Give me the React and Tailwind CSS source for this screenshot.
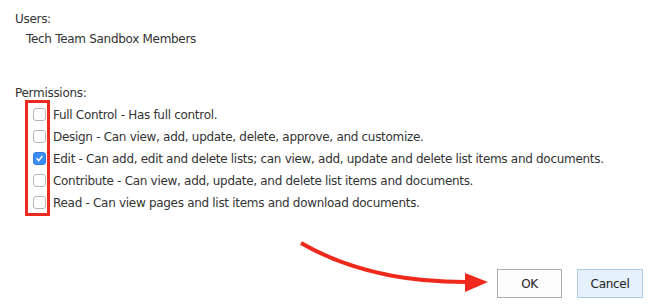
import React from "react";

const rows = [
	{ label: "Full Control - Has full control.", checked: false },
	{ label: "Design - Can view, add, update, delete, approve, and customize.", checked: false },
	{ label: "Edit - Can add, edit and delete lists; can view, add, update and delete list items and documents.", checked: true },
	{ label: "Contribute - Can view, add, update, and delete list items and documents.", checked: false },
	{ label: "Read - Can view pages and list items and download documents.", checked: false },
];

const Box = ({ checked }) => (
	<div className="h-[22px] flex items-center">
		{checked ? (
			<span className="w-[13px] h-[13px] rounded-[3px] bg-[#3b8ef5] border border-[#2f7de0] flex items-center justify-center">
				<svg width="9" height="9" viewBox="0 0 9 9">
					<path d="M2 4.8 L3.8 6.6 L7 2.4" fill="none" stroke="white" strokeWidth="1.5" strokeLinecap="round" strokeLinejoin="round" />
				</svg>
			</span>
		) : (
			<span className="w-[13px] h-[13px] rounded-[3px] bg-white border border-[#b8b8b8]" />
		)}
	</div>
);

const App = () => {
	return (
		<div className="relative w-[648px] h-[306px] bg-white text-[#333] text-[12px] tracking-[-0.3px]" style={{ fontFamily: '"DejaVu Sans", Verdana, sans-serif' }}>
			<div className="pt-[10px] pl-[15px] leading-[18px]">Users:</div>
			<div className="pt-[2px] pl-[26px] leading-[18px]">Tech Team Sandbox Members</div>

			<div className="mt-[36px] pl-[15px] leading-[18px]">Permissions:</div>

			<div className="flex mt-[-2px] ml-[25px]">
				<div className="border-[3px] border-[#ec2a1f] pl-[5px] pr-[1px] flex flex-col w-[25px] h-[116px] pt-[1px]">
					{rows.map((r, i) => (
						<Box key={i} checked={r.checked} />
					))}
				</div>
				<div className="flex flex-col pl-[3px] pt-[4px]">
					{rows.map((r, i) => (
						<div key={i} className="h-[22px] leading-[22px] whitespace-nowrap">
							{r.label}
						</div>
					))}
				</div>
			</div>

			<div className="flex justify-end gap-[15px] pr-[5px] mt-[53px]">
				<button className="w-[65px] h-[29px] border border-[#ababab] bg-[#fdfdfd] text-[#222] text-[12px]">OK</button>
				<button className="w-[66px] h-[29px] border border-[#a9cdeb] bg-[#e5f1fb] text-[#222] text-[12px]">Cancel</button>
			</div>

			{/* annotation arrow */}
			<svg className="absolute left-0 top-0 pointer-events-none" width="648" height="306">
				<path d="M301 243 Q 370 283 470 282" fill="none" stroke="#f0291d" strokeWidth="4" />
				<path d="M465 273 L488 282 L465 292 Z" fill="#f0291d" />
			</svg>
		</div>
	);
};

export default App;
